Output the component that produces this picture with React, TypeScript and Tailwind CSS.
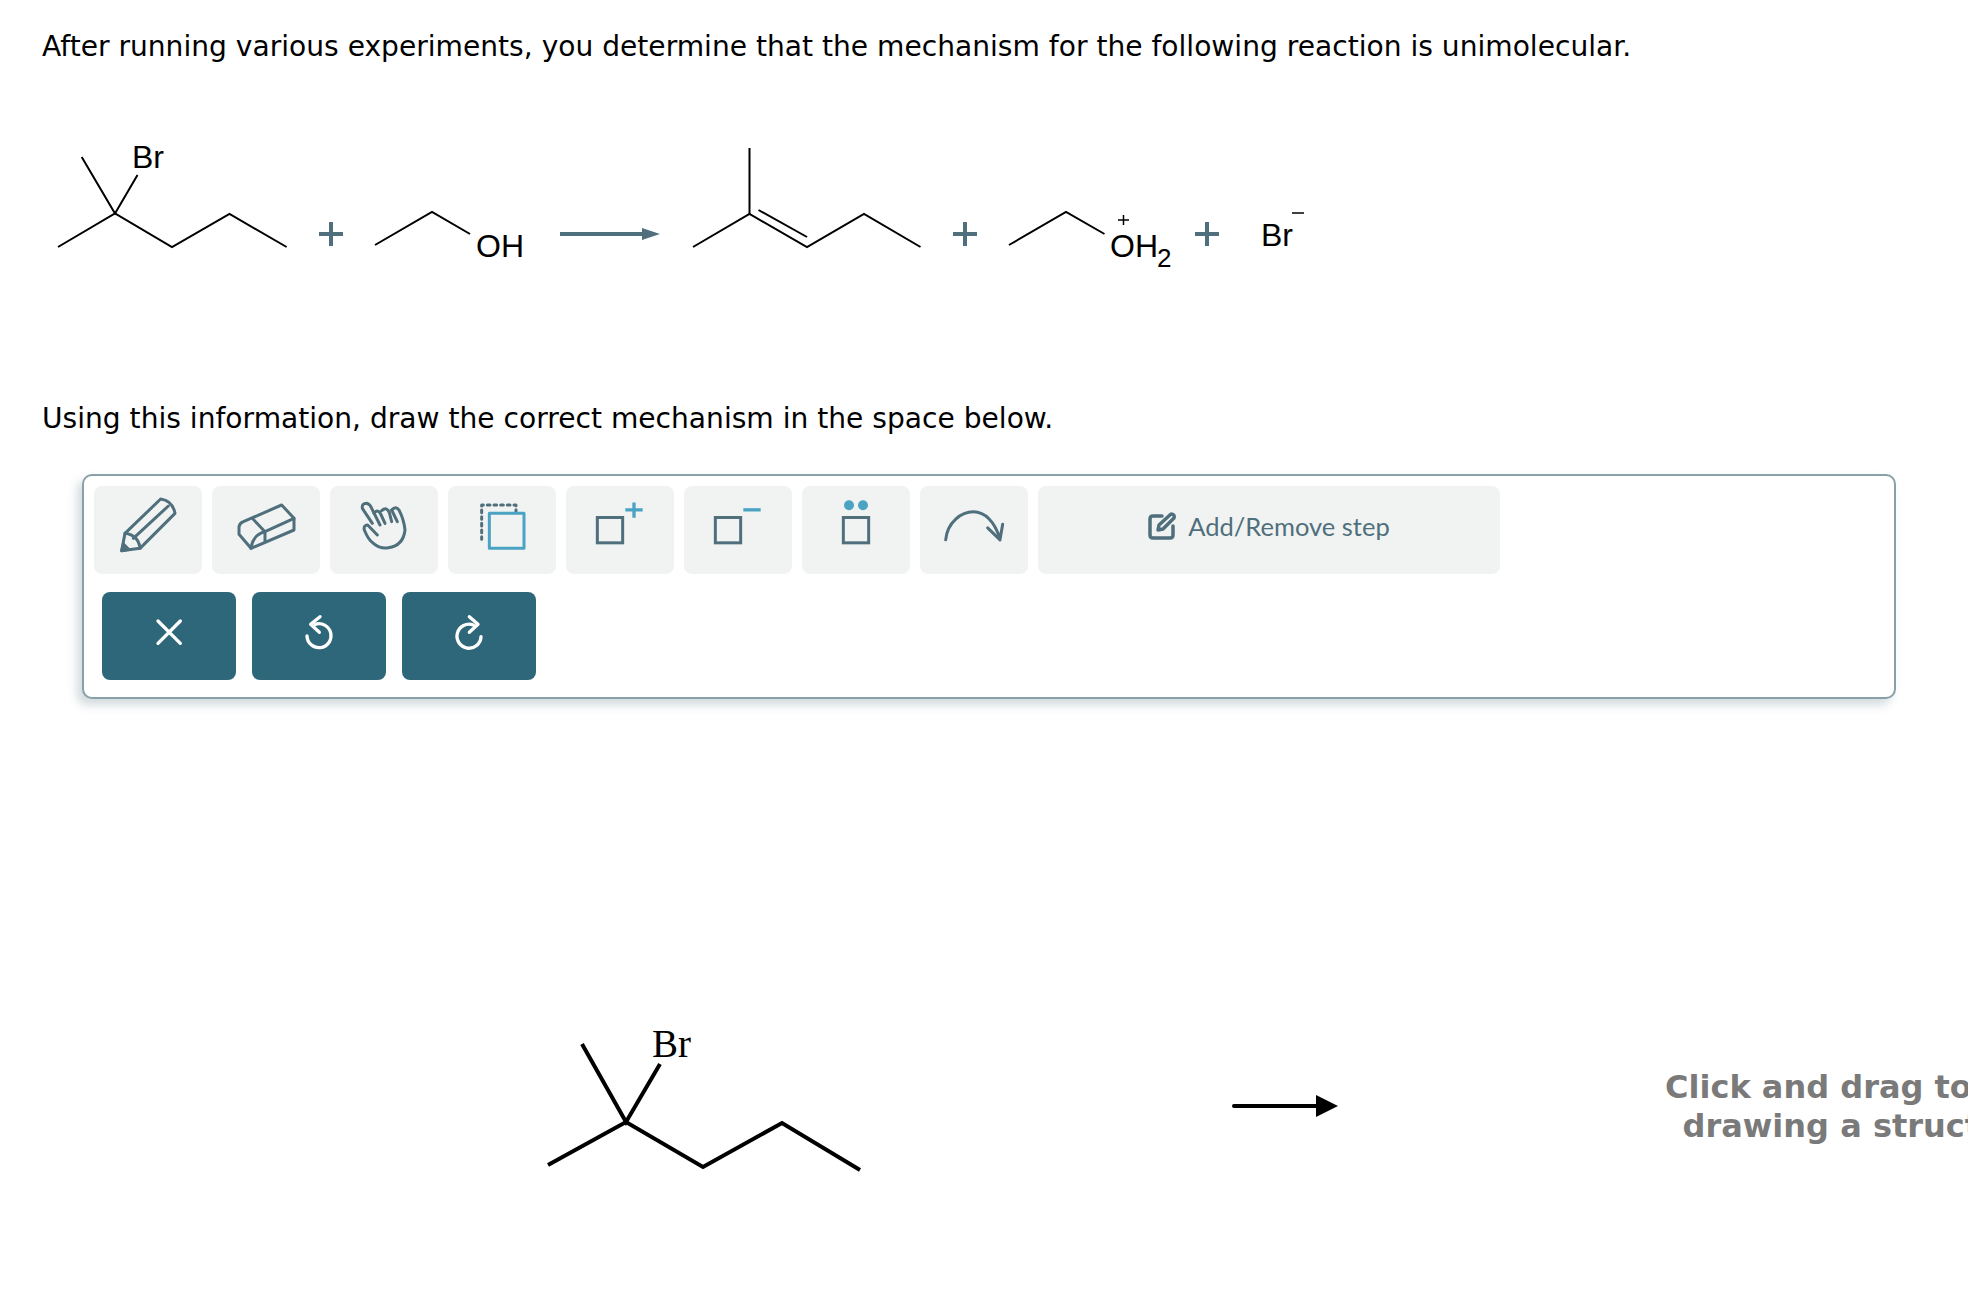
import React from 'react';

const slate = '#4f6f7c';
const blue = '#4ba3c3';

function ToolButton({ viewBox, children }: { viewBox: string; children: React.ReactNode }) {
  return (
    <button className="w-[108px] h-[88px] rounded-[8px] bg-[#f1f3f3]">
      <svg viewBox={viewBox} className="block w-full h-full" fill="none" stroke={slate} strokeWidth={9} strokeLinecap="round" strokeLinejoin="round">
        {children}
      </svg>
    </button>
  );
}

function DarkButton({ viewBox, children }: { viewBox: string; children: React.ReactNode }) {
  return (
    <button className="w-[134px] h-[88px] rounded-[8px] bg-[#2e6779]">
      <svg viewBox={viewBox} className="block w-full h-full" fill="none" stroke="#ffffff" strokeWidth={10} strokeLinecap="round" strokeLinejoin="round">
        {children}
      </svg>
    </button>
  );
}

function Reaction() {
  return (
    <svg viewBox="0 120 1400 200" className="block mt-[55px] w-[1400px] h-[200px]" fill="none" stroke="#000000" strokeWidth={2}>
      {/* 2-bromo-2-methylpentane */}
      <path d="M58,247 L115,213.5 L172,247 L229.5,214 L286.6,247" />
      <path d="M81.7,157 L115,213.5 L137.5,175" />
      {/* ethanol */}
      <path d="M375,245 L432,212 L470,234" />
      {/* alkene */}
      <path d="M693,247 L749.5,214 L807,247 L864,214 L920.5,247" />
      <path d="M749.5,148 L749.5,214" />
      <path d="M758.5,210 L807,237" />
      {/* ethyloxonium */}
      <path d="M1009,245 L1066,212 L1104.5,234" />

      <g stroke={slate} strokeWidth={4}>
        <path d="M319,234 L343,234 M331,222 L331,246" />
        <path d="M953,234 L977,234 M965,222 L965,246" />
        <path d="M1195,234 L1219,234 M1207,222 L1207,246" />
        <path d="M560,234 L644,234" />
      </g>
      <path d="M642,228 L660,234 L642,240 Z" fill={slate} stroke="none" />

      <g fill="#000000" stroke="none" fontFamily="'Liberation Sans', sans-serif" fontSize={32}>
        <text x="132" y="168">Br</text>
        <text x="476" y="257">OH</text>
        <text x="1110" y="257">OH</text>
        <text x="1157" y="267" fontSize={26}>2</text>
        <text x="1261" y="246">Br</text>
      </g>
      <path d="M1118,220 L1129,220 M1123.5,215 L1123.5,225" strokeWidth={1.5} />
      <path d="M1292,213 L1304,213" strokeWidth={1.5} />
    </svg>
  );
}

function Toolbar() {
  return (
    <div className="mt-[37px] ml-[82px] w-[1814px] h-[225px] rounded-[10px] border-2 border-[#88a0a8] bg-white pl-[10px] pt-[10px] shadow-[-5px_6px_10px_rgba(79,111,124,0.25)]">
      <div className="flex gap-[10px]">
        <ToolButton viewBox="12 18 324 264">
          <path d="M95,212 L105,160 L212,57 Q248,62 255,100 L150,205 Z" />
          <path d="M105,160 Q145,165 150,205 M130,175 L235,78" />
          <path d="M95,212 L100,192 L116,208 Z" fill={slate} />
        </ToolButton>
        <ToolButton viewBox="366 18 324 264">
          <path d="M575,75 L612,115 L612,150 L483,205 L447,163 L447,140 Q450,127 460,125 Z" />
          <path d="M487,115 L525,155 L612,115 M525,155 L525,183 M525,155 Q488,165 483,205" />
        </ToolButton>
        <ToolButton viewBox="30 18 324 264">
          <path d="M172,165 L143,135 Q130,135 133,150 Q145,180 160,190 Q180,207 205,203 Q250,197 255,150 Q252,120 238,92 Q228,76 215,90" />
          <path d="M157,130 L127,85 Q125,70 140,70 Q150,72 155,85 L180,135" />
          <path d="M162,100 Q172,85 182,102 L195,130 M185,92 Q200,78 208,98 L215,125 M215,90 L232,125" />
        </ToolButton>
        <ToolButton viewBox="384 18 324 264">
          <path d="M485,178 L485,75 L588,75 L588,97" strokeDasharray="8 12" />
          <rect x="508" y="100" width="104" height="105" stroke={blue} strokeLinecap="butt" />
        </ToolButton>
        <ToolButton viewBox="48 63 324 263">
          <rect x="142" y="157" width="76" height="76" strokeLinejoin="miter" />
          <path d="M226,134 L278,134 M252,112 L252,158" stroke={blue} strokeWidth={10} strokeLinecap="butt" />
        </ToolButton>
        <ToolButton viewBox="402 63 324 263">
          <rect x="496" y="157" width="76" height="76" strokeLinejoin="miter" />
          <path d="M580,134 L632,134" stroke={blue} strokeWidth={10} strokeLinecap="butt" />
        </ToolButton>
        <ToolButton viewBox="756 63 324 263">
          <rect x="880" y="157" width="76" height="76" strokeLinejoin="miter" />
          <circle cx="897" cy="120" r="15" fill={blue} stroke="none" />
          <circle cx="939" cy="120" r="15" fill={blue} stroke="none" />
        </ToolButton>
        <ToolButton viewBox="1110 63 324 263">
          <path d="M1187,224 C1192,170 1235,140 1270,140 C1305,140 1335,170 1350,222 M1313,188 L1350,224 L1358,177" />
        </ToolButton>
        <button className="flex items-center justify-center gap-[12px] w-[462px] h-[88px] pb-[8px] rounded-[8px] bg-[#f1f3f3] text-[#4f6f7c] font-['Lato',sans-serif] text-[25.5px]">
          <svg viewBox="0 0 28 28" className="w-[28px] h-[28px]" fill="none" stroke={slate} strokeWidth={3.5} strokeLinecap="round" strokeLinejoin="round">
            <path d="M14,4 L5,4 Q2,4 2,7 L2,23 Q2,26 5,26 L22,26 Q25,26 25,23 L25,14" />
            <path d="M23,2 Q27,2 26,6 L15,17 L10,18 L11,13 Z" />
          </svg>
          <span>Add/Remove step</span>
        </button>
      </div>
      <div className="flex gap-[16px] mt-[18px] ml-[8px]">
        <DarkButton viewBox="96 381 402 264">
          <path d="M264,468 L331,535 M331,468 L264,535" />
        </DarkButton>
        <DarkButton viewBox="546 381 402 264">
          <path d="M750,455 L722,478 L748,502" />
          <path d="M735,478 A36,36 0 1 1 711,513" />
        </DarkButton>
        <DarkButton viewBox="996 381 402 264">
          <path d="M1198,455 L1224,478 L1198,502" />
          <path d="M1210,480 A36,36 0 1 0 1233,515" />
        </DarkButton>
      </div>
    </div>
  );
}

function Canvas() {
  return (
    <div className="relative h-[599px]">
      <svg viewBox="0 699 1968 599" className="block w-[1968px] h-[599px]" fill="none" stroke="#000000" strokeWidth={4}>
        <path d="M548,1165 L626,1122 L703,1167 L782,1123 L860,1170" />
        <path d="M582,1044 L626,1122 L660,1064" />
        <path d="M1234,1106 L1318,1106" strokeLinecap="round" />
        <path d="M1316,1095 L1338,1106 L1316,1117 Z" fill="#000000" stroke="none" />
        <text x="652" y="1057" fill="#000000" stroke="none" fontFamily="'Liberation Serif', serif" fontSize={39}>Br</text>
      </svg>
      <div className="absolute left-[1665px] top-[369px] whitespace-nowrap text-center font-['DejaVu_Sans',sans-serif] font-bold text-[32px] leading-[39px] text-[#7a7a7a]">
        Click and drag to start
        <br />
        drawing a structure.
      </div>
    </div>
  );
}

export default function App() {
  return (
    <div className="w-[1968px] h-[1298px] overflow-hidden bg-white pt-[29px] font-['DejaVu_Sans',sans-serif] text-black">
      <p className="pl-[42px] h-[36px] text-[28.12px] leading-[36px] whitespace-nowrap">
        After running various experiments, you determine that the mechanism for the following reaction is unimolecular.
      </p>
      <Reaction />
      <p className="mt-[81px] pl-[42px] h-[36px] text-[28.12px] leading-[36px] whitespace-nowrap">
        Using this information, draw the correct mechanism in the space below.
      </p>
      <Toolbar />
      <Canvas />
    </div>
  );
}
